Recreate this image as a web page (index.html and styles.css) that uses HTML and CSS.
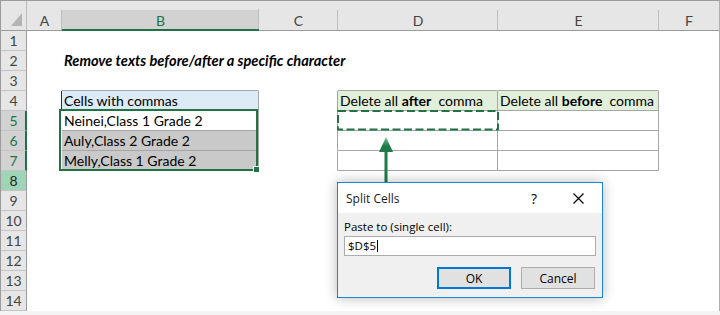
FILE: index.html
```html
<!DOCTYPE html>
<html lang="en">
<head>
<meta charset="utf-8">
<title>Split Cells</title>
<link rel="stylesheet" href="styles.css">
</head>
<body>
<div class="frame">
  <div class="sheet">
    <!-- header row -->
    <div class="corner"><svg width="12" height="14" viewBox="0 0 12 14"><polygon points="11,0 11,13 0,13" fill="#b4b4b4"/></svg></div>
    <div class="ch">A</div>
    <div class="ch selc">B</div>
    <div class="ch">C</div>
    <div class="ch">D</div>
    <div class="ch">E</div>
    <div class="ch last">F</div>
    <!-- row 1 -->
    <div class="rh">1</div><div class="c"></div><div class="c"></div><div class="c"></div><div class="c"></div><div class="c"></div><div class="c"></div>
    <!-- row 2 -->
    <div class="rh">2</div><div class="c"></div><div class="c title">Remove texts before/after a specific character</div><div class="c"></div><div class="c"></div><div class="c"></div><div class="c"></div>
    <!-- row 3 -->
    <div class="rh">3</div><div class="c"></div><div class="c bb"></div><div class="c"></div><div class="c bb"></div><div class="c bb"></div><div class="c"></div>
    <!-- row 4 -->
    <div class="rh">4</div><div class="c bl-dark"></div><div class="c bd blue">Cells with commas</div><div class="c br"></div><div class="c bd green pre">Delete all <b>after</b>  comma</div><div class="c bd green pre">Delete all <b>before</b>  comma</div><div class="c"></div>
    <!-- row 5 -->
    <div class="rh sel">5</div><div class="c"></div>
    <div class="c bd sel-anchor">Neinei,Class 1 Grade 2
      <div class="selection"></div><div class="handle"></div>
    </div>
    <div class="c br"></div>
    <div class="c bd marquee-cell"><svg class="marquee" width="162" height="21" viewBox="0 0 162 21"><rect x="1" y="1" width="160" height="18.5" fill="none" stroke="#217346" stroke-width="2" stroke-dasharray="8 3.5"/></svg></div>
    <div class="c bd"></div><div class="c"></div>
    <!-- row 6 -->
    <div class="rh sel">6</div><div class="c"></div><div class="c bd gray">Auly,Class 2 Grade 2</div><div class="c br"></div><div class="c bd"></div><div class="c bd"></div><div class="c"></div>
    <!-- row 7 -->
    <div class="rh sel">7</div><div class="c"></div><div class="c bd gray">Melly,Class 1 Grade 2</div><div class="c br"></div><div class="c bd"></div><div class="c bd"></div><div class="c"></div>
    <!-- row 8 -->
    <div class="rh act">8</div><div class="c"></div><div class="c"></div><div class="c"></div><div class="c"></div><div class="c"></div><div class="c"></div>
    <!-- row 9 -->
    <div class="rh">9</div><div class="c"></div><div class="c"></div><div class="c"></div><div class="c"></div><div class="c"></div><div class="c"></div>
    <!-- row 10 -->
    <div class="rh">10</div><div class="c"></div><div class="c"></div><div class="c"></div><div class="c"></div><div class="c"></div><div class="c"></div>
    <!-- row 11 -->
    <div class="rh">11</div><div class="c"></div><div class="c"></div><div class="c"></div><div class="c"></div><div class="c"></div><div class="c"></div>
    <!-- row 12 -->
    <div class="rh">12</div><div class="c"></div><div class="c"></div><div class="c"></div><div class="c"></div><div class="c"></div><div class="c"></div>
    <!-- row 13 -->
    <div class="rh">13</div><div class="c"></div><div class="c"></div><div class="c"></div><div class="c"></div><div class="c"></div><div class="c"></div>
    <!-- row 14 -->
    <div class="rh">14</div><div class="c"></div><div class="c"></div><div class="c"></div><div class="c"></div><div class="c"></div><div class="c"></div>
  </div>

  <svg class="arrow" width="16" height="46" viewBox="0 0 16 46">
    <defs>
      <linearGradient id="ag" x1="0" y1="0" x2="0" y2="1">
        <stop offset="0" stop-color="#7cc59a"/>
        <stop offset="0.6" stop-color="#1e7b47"/>
      </linearGradient>
    </defs>
    <polygon points="8,0 15,15 1,15" fill="url(#ag)"/>
    <rect x="6.5" y="15" width="3" height="31" fill="#1e7b47"/>
  </svg>

  <div class="dialog">
    <div class="titlebar">
      <span class="dtitle">Split Cells</span>
      <span class="help">?</span>
      <svg class="close" width="11" height="11" viewBox="0 0 11 11"><path d="M0.5 0.5 L10.5 10.5 M10.5 0.5 L0.5 10.5" stroke="#000" stroke-width="1.2"/></svg>
    </div>
    <div class="dbody">
      <div class="label">Paste to (single cell):</div>
      <div class="input"><span>$D$5</span><span class="caret"></span></div>
      <div class="buttons">
        <div class="btn ok">OK</div>
        <div class="btn">Cancel</div>
      </div>
    </div>
  </div>
</div>
</body>
</html>
```
FILE: styles.css
```css
html, body {
  margin: 0;
  padding: 0;
  background: #fff;
}

.frame {
  position: relative;
  width: 720px;
  height: 315px;
  overflow: hidden;
  background: linear-gradient(#fff, #fff) top/100% 311px no-repeat, linear-gradient(#bdbdbd, #f4f4f4 5px);
}

.sheet {
  display: grid;
  grid-template-columns: 26px 35px 197px 79px 160px 161px 60px;
  grid-template-rows: 30px repeat(14, 20px);
  width: 720px;
  box-sizing: border-box;
  border-top: 1px solid #9c9c9c;
  border-left: 1px solid #9c9c9c;
  border-right: 1px solid #b0b0b0;
  font-family: "Lato", "Open Sans", sans-serif;
  font-size: 14px;
  color: #000;
  background: #fff;
}

.sheet > div {
  box-sizing: border-box;
  min-width: 0;
}

/* corner + column headers */
.corner {
  background: #e6e6e6;
  border-bottom: 1px solid #9b9b9b;
  border-right: 1px solid #bcbcbc;
  display: flex;
  align-items: flex-end;
  justify-content: flex-end;
  padding: 0 3px 3px 0;
}

.ch {
  background: linear-gradient(#bfbfbf, #bfbfbf) right bottom / 1px 20px no-repeat, #e6e6e6;
  border-bottom: 1px solid #9b9b9b;
  text-align: center;
  padding-top: 10px;
  line-height: 19px;
  font-size: 14px;
  color: #444;
}

.ch.last {
  background: #e6e6e6;
}

.ch.selc {
  background: linear-gradient(#bfbfbf, #bfbfbf) right bottom / 1px 20px no-repeat,
              linear-gradient(#d2d2d2, #d2d2d2) left bottom / 100% 19px no-repeat, #e6e6e6;
  border-bottom: 2px solid #217346;
  color: #217346;
}

/* row headers */
.rh {
  background: #e6e6e6;
  border-right: 1px solid #9b9b9b;
  border-bottom: 1px solid #c4c4c4;
  text-align: center;
  line-height: 19px;
  font-size: 14px;
  color: #444;
}

.rh.sel {
  background: #d2d2d2;
  color: #217346;
  border-right: 2px solid #217346;
  padding-left: 1px;
}

.rh.act {
  background: #9fd5b7;
  color: #262626;
}

/* cells */
.c {
  border-right: 1px solid transparent;
  border-bottom: 1px solid transparent;
  padding: 0 2px;
  line-height: 19px;
  white-space: nowrap;
}

.pre {
  white-space: pre;
}

.bd {
  border-right-color: #a6a6a6;
  border-bottom-color: #a6a6a6;
}

.bb {
  border-bottom-color: #a6a6a6;
}

.br {
  border-right-color: #a6a6a6;
}

.bl-dark {
  border-right-color: #2f2f2f;
}

.blue {
  background: #ddebf7;
}

.green {
  background: #e2efda;
}

.gray {
  background: #c9c9c9;
}

.title {
  overflow: visible;
  font-weight: bold;
  font-style: italic;
  font-size: 14.6px;
  position: relative;
  z-index: 1;
}

.sel-anchor {
  position: relative;
}

.selection {
  position: absolute;
  left: -3px;
  top: -2px;
  width: 199px;
  height: 62px;
  box-sizing: border-box;
  border: 2px solid #217346;
  pointer-events: none;
  z-index: 2;
}

.handle {
  position: absolute;
  left: 191px;
  top: 55px;
  width: 7px;
  height: 7px;
  box-sizing: border-box;
  background: #217346;
  border: 1px solid #fff;
  z-index: 3;
}

.marquee-cell {
  position: relative;
}

.marquee {
  position: absolute;
  left: -1px;
  top: -1px;
  z-index: 2;
}

/* arrow */
.arrow {
  position: absolute;
  left: 378px;
  top: 137px;
  z-index: 4;
}

/* dialog */
.dialog {
  position: absolute;
  left: 337px;
  top: 182px;
  width: 266px;
  height: 116px;
  box-sizing: border-box;
  border: 1px solid #1883d7;
  background: #f0f0f0;
  box-shadow: 0 0 12px rgba(0, 0, 0, 0.28);
  font-family: "Open Sans", "Noto Sans", sans-serif;
  font-size: 11.5px;
  color: #000;
  z-index: 5;
}

.titlebar {
  height: 30px;
  background: #fff;
  display: flex;
  align-items: center;
  padding-left: 8px;
}

.dtitle {
  flex: 1;
  font-size: 12px;
  color: #1a1a1a;
}

.help {
  font-size: 14px;
  margin-right: 36px;
}

.close {
  margin-right: 18px;
}

.dbody {
  padding: 6px 6px 0 6px;
}

.label {
  line-height: 16px;
}

.input {
  margin-top: 1px;
  height: 20px;
  box-sizing: border-box;
  border: 1px solid #adadad;
  background: #fff;
  display: flex;
  align-items: center;
  padding-left: 3px;
  line-height: 16px;
}

.caret {
  display: inline-block;
  width: 1px;
  height: 12px;
  background: #000;
  margin-left: 1px;
}

.buttons {
  margin-top: 11px;
  display: flex;
  justify-content: flex-end;
  gap: 10px;
  padding-right: 1px;
}

.btn {
  width: 74px;
  height: 22px;
  box-sizing: border-box;
  border: 1px solid #adadad;
  background: #e1e1e1;
  display: flex;
  align-items: center;
  justify-content: center;
  font-size: 12px;
}

.btn.ok {
  border: 2px solid #0078d7;
}
```
